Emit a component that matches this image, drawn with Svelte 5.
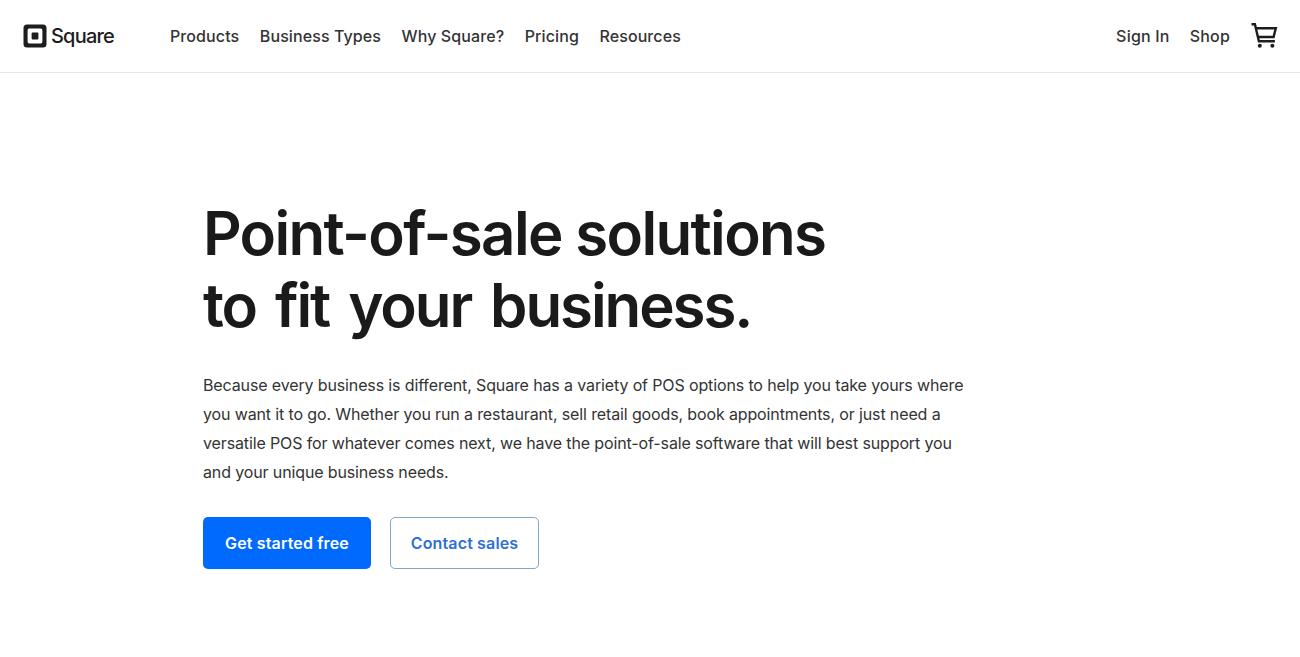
<script>
    const navLinks = ["Products", "Business Types", "Why Square?", "Pricing", "Resources"]
</script>

<header class="topbar">
    <a class="logo" href="#top">
        <svg width="24" height="24" viewBox="0 0 24 24" aria-hidden="true">
            <path fill="#1d1d1d" fill-rule="evenodd" d="M4 0.5h16a3.5 3.5 0 0 1 3.5 3.5v16a3.5 3.5 0 0 1-3.5 3.5H4A3.5 3.5 0 0 1 .5 20V4A3.5 3.5 0 0 1 4 .5zM6.2 4.6a1.6 1.6 0 0 0-1.6 1.6v11.6a1.6 1.6 0 0 0 1.6 1.6h11.6a1.6 1.6 0 0 0 1.6-1.6V6.2a1.6 1.6 0 0 0-1.6-1.6z" />
            <rect x="8.6" y="8.6" width="6.8" height="6.8" rx="0.8" fill="#1d1d1d" />
        </svg>
        <span>Square</span>
    </a>
    <nav class="main-nav">
        {#each navLinks as link}
            <a href="#top">{link}</a>
        {/each}
    </nav>
    <div class="account">
        <a href="#top">Sign In</a>
        <a href="#top">Shop</a>
        <svg class="cart" width="28" height="28" viewBox="0 0 28 28" fill="none" stroke="#1d1d1d" stroke-width="2.4" aria-hidden="true">
            <path d="M1.5 2.2h3.4l4 17h16" />
            <path d="M5.8 6.2h20l-2.2 8.8H7.8" />
            <circle cx="9.8" cy="23.8" r="2" fill="#1d1d1d" stroke="none" />
            <circle cx="22.4" cy="23.8" r="2" fill="#1d1d1d" stroke="none" />
        </svg>
    </div>
</header>

<main class="hero">
    <h1><span class="first">Point-of-sale solutions</span><span class="second">to fit your business.</span></h1>
    <p>
        Because every business is different, Square has a variety of POS options to help you take yours where<br />
        you want it to go. Whether you run a restaurant, sell retail goods, book appointments, or just need a<br />
        versatile POS for whatever comes next, we have the point-of-sale software that will best support you<br />
        and your unique business needs.
    </p>
    <div class="actions">
        <a class="button primary" href="#top">Get started free</a>
        <a class="button outline" href="#top">Contact sales</a>
    </div>
</main>

<style>
    :global(body) {
        background: #fff;
        color: #1d1d1d;
        font-family: Inter, "Liberation Sans", sans-serif;
    }

    a {
        color: inherit;
        text-decoration: none;
    }

    .topbar {
        display: flex;
        align-items: center;
        height: 72px;
        padding: 0 22px 0 23px;
        border-bottom: 1px solid #e6e6e6;
        font-size: 16px;
        font-weight: 500;
        letter-spacing: 0.1px;
        color: #333;
    }

    .logo {
        display: flex;
        align-items: center;
        gap: 4px;
        width: 147px;
        font-size: 20px;
        font-weight: 500;
        letter-spacing: -0.8px;
        color: #1d1d1d;
    }

    .main-nav {
        display: flex;
        gap: 20.5px;
    }

    .account {
        display: flex;
        align-items: center;
        gap: 20px;
        margin-left: auto;
        letter-spacing: 0.2px;
    }

    .hero {
        padding: 124px 0 0 203px;
    }

    h1 {
        margin: 0;
        font-size: 60px;
        line-height: 72px;
        font-weight: 600;
        color: #1a1a1a;
    }

    h1 span {
        display: block;
    }

    h1 .first {
        letter-spacing: -1.65px;
    }

    h1 .second {
        letter-spacing: -2.1px;
        word-spacing: 6px;
    }

    p {
        margin: 30px 0 0;
        font-size: 16px;
        line-height: 29px;
        font-weight: 400;
        letter-spacing: -0.13px;
        color: #333;
        white-space: nowrap;
    }

    .actions {
        display: flex;
        gap: 19px;
        margin-top: 30px;
    }

    .button {
        display: flex;
        align-items: center;
        justify-content: center;
        box-sizing: border-box;
        height: 52px;
        border-radius: 5px;
        font-size: 16px;
        font-weight: 600;
        letter-spacing: 0.15px;
    }

    .primary {
        width: 168px;
        background: #006aff;
        color: #fff;
    }

    .outline {
        width: 149px;
        border: 1px solid #7fa8c9;
        color: #2f6fd8;
    }
</style>
